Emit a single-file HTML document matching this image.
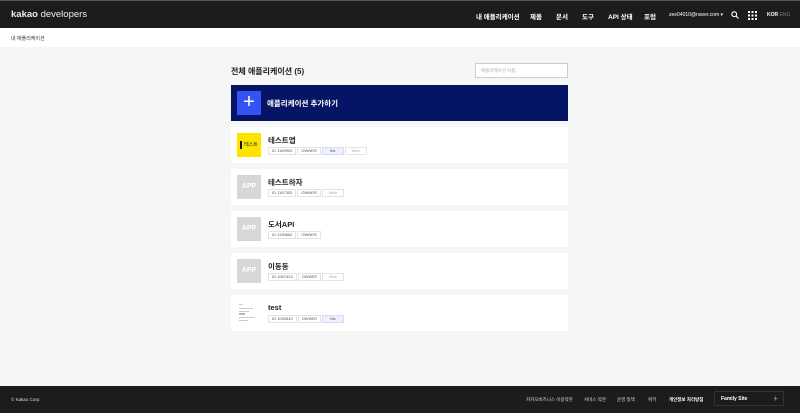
<!DOCTYPE html>
<html><head><meta charset="utf-8"><style>
*{margin:0;padding:0;box-sizing:border-box}
body{width:800px;height:413px;overflow:hidden;background:#f5f6f6;font-family:"Liberation Sans","Noto Sans CJK KR",sans-serif;position:relative}
.hd{position:absolute;left:0;top:0;width:800px;height:28px;background:#1c1c1d;border-top:1px solid #555}
.logo{position:absolute;left:11px;top:8px;color:#eee;font-size:9.5px}
.logo b{font-weight:bold}
.nav{position:absolute;top:10px;font-size:6.5px;color:#fff;font-weight:bold}
.bc{position:absolute;left:0;top:28px;width:800px;height:19px;background:#fff;font-size:5px;color:#333;padding:7px 11px}
.title{position:absolute;left:231px;top:66px;font-size:8px;font-weight:bold;color:#222}
.search{position:absolute;left:475px;top:63px;width:93px;height:15px;border:1px solid #ccc;background:#fff;font-size:4.5px;color:#aaa;padding:4px 5px}
.add{position:absolute;left:231px;top:85px;width:337px;height:36px;background:#061466}
.add .p{position:absolute;left:6px;top:6px;width:24px;height:24px;background:#3453f5;color:#fff;font-size:20px;line-height:22px;text-align:center;font-weight:300}
.add .t{position:absolute;left:36px;top:13px;color:#fff;font-size:7.5px;font-weight:bold}
.card{position:absolute;left:231px;width:337px;height:36px;background:#fff}
.ic{position:absolute;left:6px;top:6px;width:24px;height:24px;background:#d7d7d7;color:#fff;font-size:7px;font-weight:bold;text-align:center;line-height:24px}
.nm{position:absolute;left:37px;top:8px;font-size:7.5px;font-weight:bold;color:#222}
.tags{position:absolute;left:37px;top:20px;display:flex;gap:1px}
.tag{height:8px;border:1px solid #e3e3e3;font-size:4px;color:#555;padding:0 3px;line-height:6px;background:#fff}
.tag.biz{background:#eef0ff;border-color:#d6dbf5;width:22px;text-align:center}
.tag.web{width:22px;text-align:center;color:#aaa}
.ft{position:absolute;left:0;top:386px;width:800px;height:27px;background:#1c1c1d}
.ft span{position:absolute;top:11px;font-size:4.5px;color:#ddd}
.fs{position:absolute;left:714px;top:5px;width:70px;height:15px;border:1px solid #333;color:#fff;font-size:5px;font-weight:bold;padding:4px 6px}
</style></head><body>
<div class="hd">
<div class="logo"><b>kakao</b> developers</div>
<span class="nav" style="left:476px">내 애플리케이션</span>
<span class="nav" style="left:530px">제품</span>
<span class="nav" style="left:556px">문서</span>
<span class="nav" style="left:582px">도구</span>
<span class="nav" style="left:608px">API 상태</span>
<span class="nav" style="left:644px">포럼</span>
<span class="nav" style="left:669px;font-size:5px;font-weight:normal;top:11px">zee04010@naver.com ▾</span>
<svg style="position:absolute;left:731px;top:10px" width="8" height="8" viewBox="0 0 8 8"><circle cx="3.2" cy="3.2" r="2.4" fill="none" stroke="#fff" stroke-width="1.1"/><path d="M5 5L7.5 7.5" stroke="#fff" stroke-width="1.2"/></svg>
<svg style="position:absolute;left:748px;top:10px" width="9" height="9" viewBox="0 0 9 9" fill="#fff"><rect x="0" y="0" width="2" height="2"/><rect x="3.5" y="0" width="2" height="2"/><rect x="7" y="0" width="2" height="2"/><rect x="0" y="3.5" width="2" height="2"/><rect x="3.5" y="3.5" width="2" height="2"/><rect x="7" y="3.5" width="2" height="2"/><rect x="0" y="7" width="2" height="2"/><rect x="3.5" y="7" width="2" height="2"/><rect x="7" y="7" width="2" height="2"/></svg>
<span class="nav" style="left:767px;font-size:5px;top:11px">KOR <span style="color:#777;font-weight:normal">ENG</span></span>
</div>
<div class="bc">내 애플리케이션</div>
<div class="title">전체 애플리케이션 (5)</div>
<div class="search">애플리케이션 이름</div>
<div class="add"><div class="p">+</div><div class="t">애플리케이션 추가하기</div></div>

<div class="card" style="top:127px"><div class="ic" style="background:#fee500;color:#222;font-size:5px;font-weight:normal"><span style="display:inline-block;width:2px;height:8px;background:#111;vertical-align:middle;margin-right:2px"></span>테스트</div><div class="nm">테스트앱</div><div class="tags"><div class="tag">ID 1169900</div><div class="tag">OWNER</div><div class="tag biz">Biz</div><div class="tag web">Web</div></div></div>
<div class="card" style="top:169px"><div class="ic">APP</div><div class="nm">테스트하자</div><div class="tags"><div class="tag">ID 1167302</div><div class="tag">OWNER</div><div class="tag web">Web</div></div></div>
<div class="card" style="top:211px"><div class="ic">APP</div><div class="nm">도서API</div><div class="tags"><div class="tag">ID 1135662</div><div class="tag">OWNER</div></div></div>
<div class="card" style="top:253px"><div class="ic">APP</div><div class="nm">이동동</div><div class="tags"><div class="tag">ID 1067423</div><div class="tag">OWNER</div><div class="tag web">Web</div></div></div>
<div class="card" style="top:295px"><div class="ic" style="background:#fff"><svg width="24" height="24"><g fill="#ccc"><rect x="2" y="3" width="4" height="1"/><rect x="2" y="7" width="14" height="1"/><rect x="2" y="10" width="10" height="1"/><rect x="2" y="12" width="6" height="2" fill="#9c9"/><rect x="2" y="16" width="16" height="1"/><rect x="2" y="19" width="9" height="1"/></g></svg></div><div class="nm">test</div><div class="tags"><div class="tag">ID 1030540</div><div class="tag">OWNER</div><div class="tag biz">Biz</div></div></div>

<div class="ft">
<span style="left:11px">© Kakao Corp.</span>
<span style="left:526px">카카오비즈니스 이용약관</span>
<span style="left:584px">서비스 약관</span>
<span style="left:617px">운영 정책</span>
<span style="left:648px">위키</span>
<span style="left:669px;font-weight:bold;color:#fff">개인정보 처리방침</span>
<div class="fs">Family Site<span style="position:absolute;right:5px;top:2px;font-size:8px;font-weight:normal;color:#aaa">+</span></div>
</div>
</body></html>
